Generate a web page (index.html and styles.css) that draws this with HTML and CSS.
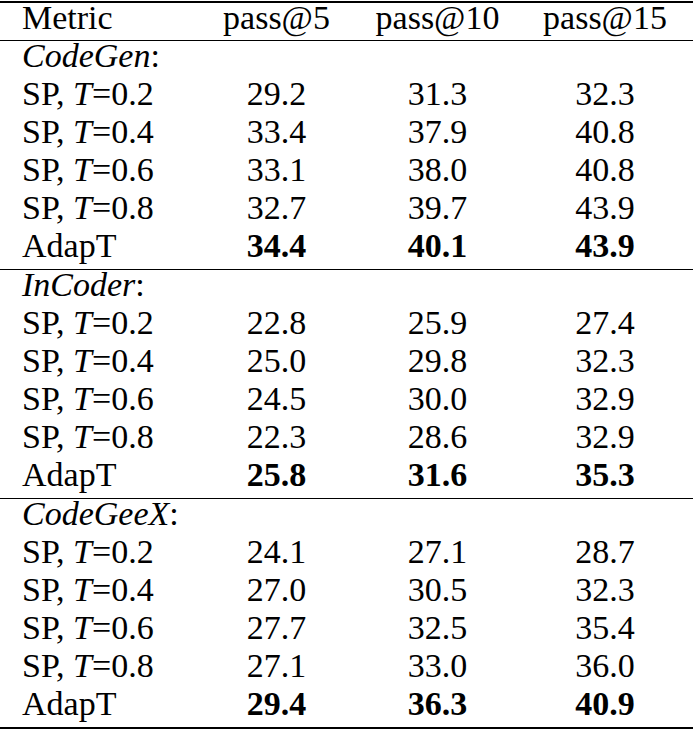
FILE: index.html
```html
<!DOCTYPE html>
<html lang="en">

<head>
    <meta charset="UTF-8">
    <meta name="viewport" content="width=device-width, initial-scale=1.0">
    <title>pass@k results</title>
    <link rel="stylesheet" href="styles.css">
</head>

<body>
    <table class="results">
        <colgroup>
            <col class="col-metric">
            <col class="col-k5">
            <col class="col-k10">
            <col class="col-k15">
        </colgroup>
        <thead>
            <tr>
                <th>Metric</th>
                <th>pass@5</th>
                <th>pass@10</th>
                <th>pass@15</th>
            </tr>
        </thead>

        <tbody>
            <tr><td class="model" colspan="4"><i>CodeGen</i>:</td></tr>
            <tr><td>SP, <i>T</i>=0.2</td><td>29.2</td><td>31.3</td><td>32.3</td></tr>
            <tr><td>SP, <i>T</i>=0.4</td><td>33.4</td><td>37.9</td><td>40.8</td></tr>
            <tr><td>SP, <i>T</i>=0.6</td><td>33.1</td><td>38.0</td><td>40.8</td></tr>
            <tr><td>SP, <i>T</i>=0.8</td><td>32.7</td><td>39.7</td><td>43.9</td></tr>
            <tr class="best"><td>AdapT</td><td>34.4</td><td>40.1</td><td>43.9</td></tr>
        </tbody>

        <tbody>
            <tr><td class="model" colspan="4"><i>InCoder</i>:</td></tr>
            <tr><td>SP, <i>T</i>=0.2</td><td>22.8</td><td>25.9</td><td>27.4</td></tr>
            <tr><td>SP, <i>T</i>=0.4</td><td>25.0</td><td>29.8</td><td>32.3</td></tr>
            <tr><td>SP, <i>T</i>=0.6</td><td>24.5</td><td>30.0</td><td>32.9</td></tr>
            <tr><td>SP, <i>T</i>=0.8</td><td>22.3</td><td>28.6</td><td>32.9</td></tr>
            <tr class="best"><td>AdapT</td><td>25.8</td><td>31.6</td><td>35.3</td></tr>
        </tbody>

        <tbody>
            <tr><td class="model" colspan="4"><i>CodeGeeX</i>:</td></tr>
            <tr><td>SP, <i>T</i>=0.2</td><td>24.1</td><td>27.1</td><td>28.7</td></tr>
            <tr><td>SP, <i>T</i>=0.4</td><td>27.0</td><td>30.5</td><td>32.3</td></tr>
            <tr><td>SP, <i>T</i>=0.6</td><td>27.7</td><td>32.5</td><td>35.4</td></tr>
            <tr><td>SP, <i>T</i>=0.8</td><td>27.1</td><td>33.0</td><td>36.0</td></tr>
            <tr class="best"><td>AdapT</td><td>29.4</td><td>36.3</td><td>40.9</td></tr>
        </tbody>
    </table>
</body>

</html>
```

FILE: styles.css
```css
body {
    margin: 0;
    padding-top: 1px;
    background-color: #fff;
    color: #000;
    font-family: "Liberation Serif", "Times New Roman", serif;
    font-size: 34px;
}

.results {
    width: 693px;
    border-collapse: collapse;
    table-layout: fixed;
    border-top: 2px solid #000;
    border-bottom: 2px solid #000;
}

.col-metric {
    width: 200px;
}

.col-k5 {
    width: 153px;
}

.col-k10 {
    width: 169px;
}

.col-k15 {
    width: 171px;
}

th,
td {
    padding: 0 0 8px 0;
    line-height: 30px;
    text-align: center;
    font-weight: normal;
    white-space: nowrap;
}

th:first-child,
td:first-child {
    text-align: left;
    padding-left: 22px;
}

th:last-child,
td:last-child {
    padding-right: 5px;
}

thead th {
    padding-bottom: 7px;
    border-bottom: 1px solid #000;
}

tbody + tbody tr:first-child td {
    border-top: 1px solid #000;
}

.best td:not(:first-child) {
    font-weight: bold;
}
```
